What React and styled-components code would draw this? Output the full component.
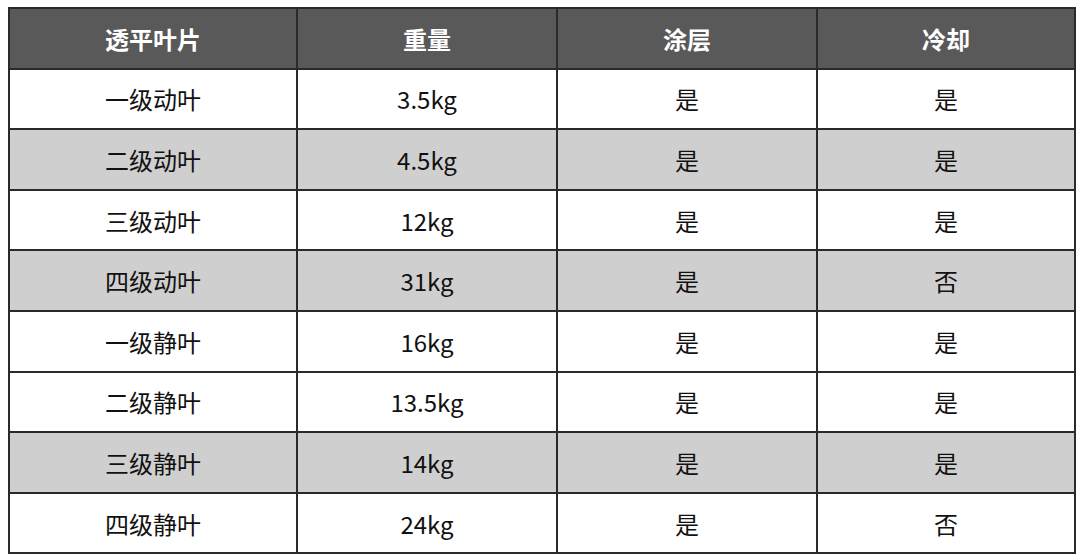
import React from "react";
import styled, { createGlobalStyle } from "styled-components";

const GlobalStyle = createGlobalStyle`
  html, body {
    margin: 0;
    padding: 0;
    background: #ffffff;
  }
  body {
    font-family: "Noto Sans CJK SC", "Noto Sans", sans-serif;
  }
`;

const Page = styled.div`
  width: 1080px;
  height: 558px;
  padding: 7px 6px 0 8px;
  box-sizing: border-box;
`;

const Table = styled.table`
  width: 1066px;
  border-collapse: collapse;
  table-layout: fixed;
  border: 2px solid #2a2a2a;
`;

const HeadCell = styled.th`
  height: 58.6px;
  padding: 0;
  background: #595959;
  color: #ffffff;
  font-size: 24px;
  font-weight: 700;
  text-align: center;
  border: 2px solid #2a2a2a;
`;

const Row = styled.tr`
  background: ${(p) => (p.$shaded ? "#d0cfcf" : "#ffffff")};
`;

const Cell = styled.td`
  height: 58.6px;
  padding: 0;
  color: #111111;
  font-size: 24px;
  text-align: center;
  border: 2px solid #2a2a2a;
`;

const columns = ["透平叶片", "重量", "涂层", "冷却"];
const widths = [288, 260, 260, 258];

const rows = [
  { cells: ["一级动叶", "3.5kg", "是", "是"] },
  { cells: ["二级动叶", "4.5kg", "是", "是"], shaded: true },
  { cells: ["三级动叶", "12kg", "是", "是"] },
  { cells: ["四级动叶", "31kg", "是", "否"], shaded: true },
  { cells: ["一级静叶", "16kg", "是", "是"] },
  { cells: ["二级静叶", "13.5kg", "是", "是"] },
  { cells: ["三级静叶", "14kg", "是", "是"], shaded: true },
  { cells: ["四级静叶", "24kg", "是", "否"] },
];

export default function App() {
  return (
    <Page>
      <GlobalStyle />
      <Table>
        <colgroup>
          {widths.map((w, i) => (
            <col key={i} style={{ width: w }} />
          ))}
        </colgroup>
        <thead>
          <tr>
            {columns.map((c) => (
              <HeadCell key={c}>{c}</HeadCell>
            ))}
          </tr>
        </thead>
        <tbody>
          {rows.map((r, i) => (
            <Row key={i} $shaded={r.shaded}>
              {r.cells.map((v, j) => (
                <Cell key={j}>{v}</Cell>
              ))}
            </Row>
          ))}
        </tbody>
      </Table>
    </Page>
  );
}
